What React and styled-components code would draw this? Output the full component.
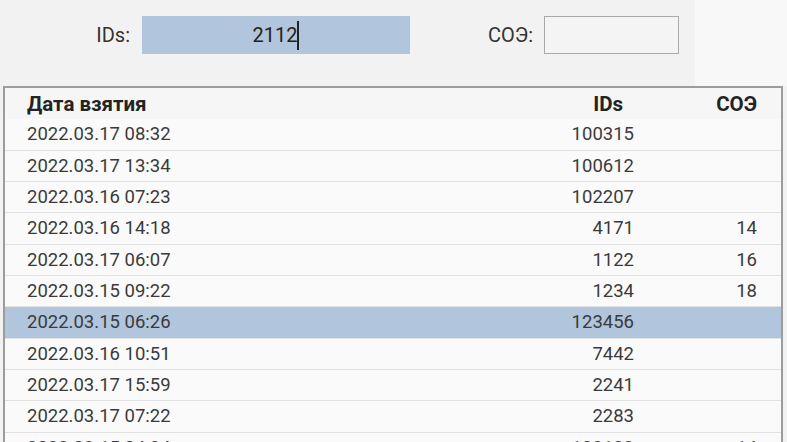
import React from "react";
import styled, { createGlobalStyle } from "styled-components";

const Global = createGlobalStyle`
  html, body { margin: 0; padding: 0; background: #f2f2f2; }
  body { font-family: Roboto, "Noto Sans", "Liberation Sans", sans-serif; color: #333; overflow: hidden; }
  #root { height: 442px; }
`;

const Page = styled.div`
  width: 787px;
  height: 442px;
  display: flex;
  flex-direction: column;
  overflow: hidden;
`;

const Toolbar = styled.div`
  height: 86px;
  flex: none;
  display: grid;
  grid-template-columns: 142px 268px 134px 135px 16px 1fr;
  align-items: start;
  padding-top: 16px;
  box-sizing: border-box;
  background: #f2f2f2;
`;

const Label = styled.label`
  height: 38px;
  line-height: 38px;
  text-align: right;
  padding-right: ${(p) => p.$pad}px;
  font-size: 20px;
  color: #333;
`;

const Field = styled.div`
  height: 38px;
  box-sizing: border-box;
  display: flex;
  align-items: center;
  justify-content: center;
  font-size: 20px;
  color: #222;
  background: ${(p) => (p.$active ? "#b1c5dc" : "#f4f4f4")};
  border: ${(p) => (p.$active ? "none" : "1px solid #a9a9a9")};
`;

const Caret = styled.span`
  display: inline-block;
  width: 2px;
  height: 29px;
  background: #222;
`;

const Filler = styled.div`
  grid-column: 6;
  height: 86px;
  margin-top: -16px;
  background: #f8f8f8;
`;

const Table = styled.div`
  flex: 1;
  margin: 0 4px 0 3px;
  border: 2px solid #9c9c9c;
  border-bottom: none;
  background: #fafafa;
  overflow: hidden;
`;

const Row = styled.div`
  display: grid;
  grid-template-columns: 1fr 140px 123px;
  align-items: center;
  height: 31.33px;
  box-sizing: border-box;
  border-bottom: ${(p) => (p.$head ? "none" : "1px solid #e2e2e2")};
  background: ${(p) => (p.$selected ? "#b1c5dc" : p.$head ? "#f6f6f6" : "transparent")};
  font-size: ${(p) => (p.$head ? "20.5px" : "18.5px")};
  font-weight: ${(p) => (p.$head ? 700 : 400)};
  color: ${(p) => (p.$head ? "#232323" : "#3a3a3a")};
`;

const Cell = styled.div`
  white-space: nowrap;
  text-align: ${(p) => (p.$right ? "right" : "left")};
  padding-left: ${(p) => (p.$right ? 0 : 22)}px;
  padding-right: ${(p) => (p.$pr ?? 24)}px;
`;

const rows = [
  ["2022.03.17 08:32", "100315", ""],
  ["2022.03.17 13:34", "100612", ""],
  ["2022.03.16 07:23", "102207", ""],
  ["2022.03.16 14:18", "4171", "14"],
  ["2022.03.17 06:07", "1122", "16"],
  ["2022.03.15 09:22", "1234", "18"],
  ["2022.03.15 06:26", "123456", ""],
  ["2022.03.16 10:51", "7442", ""],
  ["2022.03.17 15:59", "2241", ""],
  ["2022.03.17 07:22", "2283", ""],
  ["2022.03.15 04:34", "123123", "14"],
];

export default function App() {
  return (
    <Page>
      <Global />
      <Toolbar>
        <Label $pad={12}>IDs:</Label>
        <Field $active>
          2112
          <Caret />
        </Field>
        <Label $pad={11}>СОЭ:</Label>
        <Field />
        <div />
        <Filler />
      </Toolbar>
      <Table>
        <Row $head>
          <Cell>Дата взятия</Cell>
          <Cell $right $pr={35}>IDs</Cell>
          <Cell $right>СОЭ</Cell>
        </Row>
        {rows.map((r, i) => (
          <Row key={i} $selected={i === 6}>
            <Cell>{r[0]}</Cell>
            <Cell $right>{r[1]}</Cell>
            <Cell $right>{r[2]}</Cell>
          </Row>
        ))}
      </Table>
    </Page>
  );
}
